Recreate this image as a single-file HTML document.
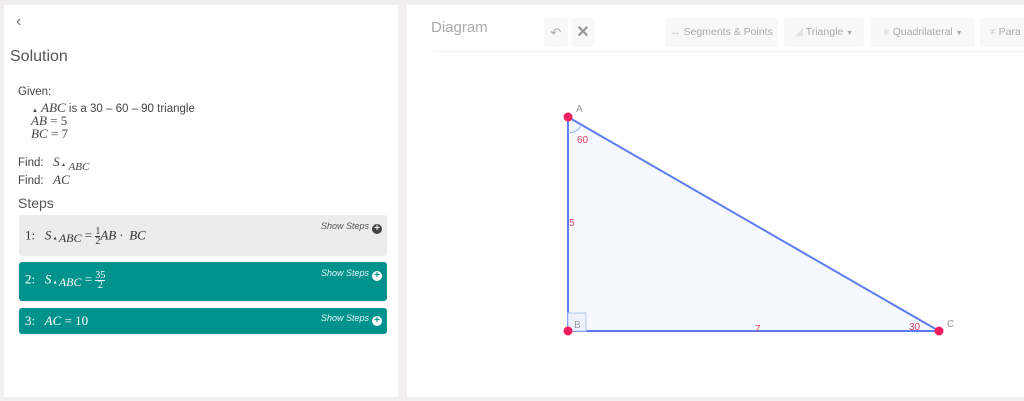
<!DOCTYPE html>
<html><head><meta charset="utf-8"><style>
body{margin:0;width:1024px;height:401px;background:#f1efef;font-family:"Liberation Sans",sans-serif;position:relative;overflow:hidden}
.lp{position:absolute;left:4px;top:5px;width:394px;height:392px;background:#fff}
.rp{position:absolute;left:407px;top:5px;width:620px;height:392px;background:#fff}
.t{position:absolute;color:#444;font-size:12px;white-space:nowrap}
.m{font-family:"Liberation Serif",serif;font-style:italic;font-size:13px}
.n{font-style:normal}
.step{position:absolute;left:19px;width:368px;border-radius:3px}
.ss{position:absolute;right:5px;top:6px;font-size:9px;font-style:italic}
.pl{display:inline-block;width:10px;height:10px;border-radius:50%;vertical-align:-2px;margin-left:3px;position:relative;font-style:normal;font-size:10px;line-height:10px;text-align:center;font-weight:bold}
.btn{position:absolute;top:13px;height:29px;background:#f8f8f8;border-radius:3px;color:#aaa;font-size:10.5px;line-height:29px}
.fr{display:inline-block;vertical-align:middle;text-align:center;font-style:normal;font-size:10px;line-height:9px}
.fr span{display:block}
.fr span:first-child{border-bottom:1px solid currentColor}
</style></head><body>
<div class="lp">
<div class="t" style="left:12px;top:8px;font-size:16px;color:#777">‹</div>
<div class="t" style="left:6px;top:43px;font-size:16px;color:#555">Solution</div>
<div class="t" style="left:14px;top:81px;font-size:11.5px">Given:</div>
<div class="t" style="left:28px;top:95px;font-size:11.5px"><span style="font-size:6px">▲</span> <span class="m">ABC</span> is a 30 – 60 – 90 triangle</div>
<div class="t m" style="left:27px;top:108px">AB <span class="n">=</span> <span class="n">5</span></div>
<div class="t m" style="left:27px;top:121px">BC <span class="n">=</span> <span class="n">7</span></div>
<div class="t" style="left:14px;top:149px;font-size:11.5px">Find: &nbsp;&nbsp;<span class="m">S</span><span style="font-size:5px"> ▲</span><span class="m" style="font-size:11px;position:relative;top:4px"> ABC</span></div>
<div class="t" style="left:14px;top:167px;font-size:11.5px">Find: &nbsp;&nbsp;<span class="m">AC</span></div>
<div class="t" style="left:14px;top:190px;font-size:14px;color:#555">Steps</div>
</div>
<div class="step" style="top:215px;height:41px;background:#ececec;color:#333">
<div class="t m" style="left:6px;top:12px;color:#333"><span class="n">1:</span>&nbsp;&nbsp; S<span style="font-size:5px;font-style:normal"> ▲ </span><span style="font-size:12px;position:relative;top:3px">ABC</span><span class="n"> = </span><span class="fr"><span>1</span><span>2</span></span>AB · &nbsp;BC</div>
<div class="ss" style="color:#555">Show Steps<span class="pl" style="background:#444;color:#ececec">+</span></div>
</div>
<div class="step" style="top:262px;height:39px;background:#00928d;color:#fff">
<div class="t m" style="left:6px;top:9px;color:#fff"><span class="n">2:</span>&nbsp;&nbsp; S<span style="font-size:5px;font-style:normal"> ▲ </span><span style="font-size:12px;position:relative;top:3px">ABC</span><span class="n"> = </span><span class="fr"><span>35</span><span>2</span></span></div>
<div class="ss" style="color:#e8f6f5">Show Steps<span class="pl" style="background:#fff;color:#00928d">+</span></div>
</div>
<div class="step" style="top:308px;height:26px;background:#00928d;color:#fff">
<div class="t m" style="left:6px;top:5px;color:#fff"><span class="n">3:</span>&nbsp;&nbsp; AC <span class="n">= 10</span></div>
<div class="ss" style="color:#e8f6f5;top:5px">Show Steps<span class="pl" style="background:#fff;color:#00928d">+</span></div>
</div>
<div class="rp">
<div class="t" style="left:24px;top:14px;font-size:15px;color:#aaa">Diagram</div>
<div class="btn" style="left:137px;width:24px;text-align:center;font-size:13px">↶</div>
<div class="btn" style="left:164px;width:24px;text-align:center;font-size:16px;color:#999;font-weight:bold">✕</div>
<div class="btn" style="left:258px;width:113px;text-align:center"><span style="color:#ccc">↔</span> Segments &amp; Points</div>
<div class="btn" style="left:377px;width:80px;text-align:center"><span style="color:#e4e4e4">◢</span> Triangle <span style="font-size:7px">▼</span></div>
<div class="btn" style="left:464px;width:104px;text-align:center"><span style="color:#e4e4e4">■</span> Quadrilateral <span style="font-size:7px">▼</span></div>
<div class="btn" style="left:573px;width:60px;padding-left:10px"><span style="color:#ccc">≠</span> Para</div>
<div style="position:absolute;left:26px;top:46px;width:600px;height:1px;background:#f0f0f0"></div>
</div>
<svg style="position:absolute;left:0;top:0" width="1024" height="401">
<polygon points="568,117 568,331 939,331" fill="#f5f8fe" stroke="#5b7cf3" stroke-width="2"/>
<rect x="568" y="313" width="18" height="18" fill="#eef2fd" stroke="#b4c6f7"/>
<path d="M568,133 A16,16 0 0 0 582,125" fill="#e6ecfc" stroke="#9fb3f4"/>
<circle cx="568" cy="117" r="4.5" fill="#f01e5a"/><circle cx="568" cy="331" r="4.5" fill="#f01e5a"/><circle cx="939" cy="331" r="4.5" fill="#f01e5a"/>
<g font-family="Liberation Sans" font-size="10"><text x="576" y="112" fill="#999">A</text><text x="574" y="328" fill="#999">B</text><text x="947" y="327" fill="#999">C</text>
<text x="577" y="143" fill="#e04060">60</text><text x="569" y="226" fill="#e04060">5</text><text x="755" y="332" fill="#e04060">7</text><text x="909" y="330" fill="#e04060">30</text></g>
</svg>
</body></html>
